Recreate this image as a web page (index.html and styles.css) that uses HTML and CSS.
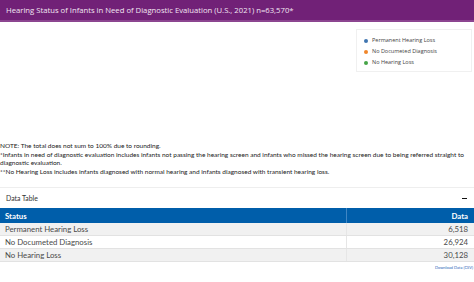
FILE: index.html
```html
<!DOCTYPE html>
<html lang="en">
<head>
<meta charset="utf-8">
<title>Hearing Status of Infants</title>
<link rel="stylesheet" href="styles.css">
</head>
<body>
<div class="header">Hearing Status of Infants in Need of Diagnostic Evaluation (U.S., 2021) n=63,570*</div>
<div class="chart">
  <div class="legend">
    <div class="item"><span class="dot blue"></span>Permanent Hearing Loss</div>
    <div class="item"><span class="dot orange"></span>No Documeted Diagnosis</div>
    <div class="item"><span class="dot green"></span>No Hearing Loss</div>
  </div>
</div>
<div class="notes">
  <p>NOTE: The total does not sum to 100% due to rounding.</p>
  <p>*Infants in need of diagnostic evaluation includes infants not passing the hearing screen and infants who missed the hearing screen due to being referred straight to diagnostic evaluation.</p>
  <p>**No Hearing Loss includes infants diagnosed with normal hearing and infants diagnosed with transient hearing loss.</p>
</div>
<div class="dt-bar"><span>Data Table</span><span class="minus"></span></div>
<table class="data">
  <thead><tr><th class="status">Status</th><th class="num">Data</th></tr></thead>
  <tbody>
    <tr><td>Permanent Hearing Loss</td><td class="num">6,518</td></tr>
    <tr><td>No Documeted Diagnosis</td><td class="num">26,924</td></tr>
    <tr><td>No Hearing Loss</td><td class="num">30,128</td></tr>
  </tbody>
</table>
<div class="dl"><a href="#">Download Data (CSV)</a></div>
</body>
</html>
```
FILE: styles.css
```css
html, body { margin: 0; padding: 0; background: #fff; }
body { font-family: Lato, "Open Sans", sans-serif; color: #333; width: 474px; overflow: hidden; }
.header {
  background: #712177;
  border-bottom: 2px solid #8c4590;
  height: 20px;
  line-height: 20px;
  padding-left: 6px;
  color: #f1e6f2;
  font-family: "Open Sans", sans-serif;
  font-size: 7.7px;
  white-space: nowrap;
}
.chart { height: 120px; display: flex; justify-content: flex-end; align-items: flex-start; }
.legend {
  margin-top: 7px;
  margin-right: 2px;
  width: 116px;
  height: 43px;
  border: 1px solid #f0f0f0;
  box-sizing: border-box;
  padding: 5px 0 0 7px;
  display: flex;
  flex-direction: column;
}
.item { display: flex; align-items: center; font-size: 5.5px; line-height: 11px; color: #444; font-family: "Open Sans", sans-serif; }
.dot { width: 4px; height: 4px; border-radius: 50%; margin-right: 4px; display: inline-block; }
.blue { background: #3f75b0; }
.orange { background: #f0862a; }
.green { background: #46a447; }
.notes { font-size: 6.5px; line-height: 8.6px; color: #222; }
.notes p { margin: 0; }
.dt-bar {
  margin-top: 11px;
  border-top: 1px solid #eee;
  height: 20px;
  display: flex;
  align-items: center;
  justify-content: space-between;
  padding: 0 6px;
  font-size: 6.9px;
  color: #333;
}
.minus { width: 5px; height: 1.5px; background: #111; margin-right: 1px; }
.data { width: 100%; border-collapse: collapse; font-size: 7.8px; }
.data th { background: #005eaa; color: #fff; font-weight: 700; height: 15px; padding: 0 5px; text-align: left; }
.data th.status { border-right: 1px solid #3f86c4; }
.data th.num { text-align: right; width: 116px; padding-right: 6px; }
.data td { height: 12px; padding: 0 5px; border-bottom: 1px solid #e2e2e2; color: #4a4a4a; }
.data td.num { text-align: right; border-left: 1px solid #e6e6e6; padding-right: 6px; }
.data tbody tr:nth-child(odd) td { background: #f1f1f1; }
.dl { text-align: right; padding-top: 3px; font-size: 4px; padding-right: 1px; white-space: nowrap; }
.dl a { color: #2a66b8; text-decoration: underline; }
```
